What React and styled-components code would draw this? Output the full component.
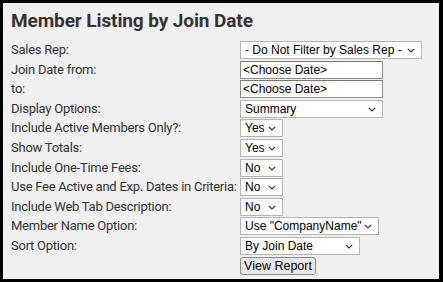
import styled, { createGlobalStyle } from "styled-components";

const Global = createGlobalStyle`
  html, body {
    margin: 0;
    padding: 0;
    background: #000;
  }
  body {
    width: 443px;
    height: 282px;
    overflow: hidden;
  }
`;

const Panel = styled.div`
  box-sizing: border-box;
  width: 443px;
  height: 282px;
  border: 3px solid #000;
  border-right-width: 4px;
  background: #f0f0f0;
  padding: 6px 0 0 8px;
  font-family: Roboto, "Liberation Sans", sans-serif;
  color: #333;
`;

const Title = styled.h1`
  margin: 0;
  font-size: 19px;
  font-weight: 700;
  line-height: 24px;
  letter-spacing: -0.1px;
`;

const Form = styled.div`
  display: grid;
  grid-template-columns: 229px auto;
  grid-auto-rows: 19.6px;
  margin-top: 8px;
`;

const Label = styled.div`
  font-size: 13px;
  line-height: 15px;
  letter-spacing: -0.25px;
  padding-top: 1px;
  white-space: nowrap;
`;

const Field = styled.div`
  display: flex;
  align-items: flex-start;
`;

const Select = styled.div`
  position: relative;
  box-sizing: border-box;
  width: ${(p) => p.$w}px;
  height: 18px;
  border: 1px solid #b4b4b4;
  background: #fff;
  font-family: "Liberation Sans", Arial, sans-serif;
  font-size: 12px;
  line-height: 16px;
  padding-left: 4px;
  color: #000;
  white-space: nowrap;
`;

const Chevron = styled.svg`
  position: absolute;
  right: 6px;
  top: 6px;
  width: 8px;
  height: 5px;
`;

const Input = styled.div`
  box-sizing: border-box;
  width: 143px;
  height: 18px;
  border: 1px solid #8c8c8c;
  border-top-color: #767676;
  background: #fff;
  font-family: "Liberation Sans", Arial, sans-serif;
  font-size: 12px;
  line-height: 16px;
  padding-left: 2px;
  color: #000;
`;

const Button = styled.div`
  box-sizing: border-box;
  width: 76px;
  height: 18px;
  border: 1px solid #8a8a8a;
  border-radius: 3px;
  background: #e9e9e9;
  font-family: "Liberation Sans", Arial, sans-serif;
  font-size: 12.5px;
  line-height: 16px;
  text-align: center;
  color: #000;
`;

const Drop = ({ w, children }) => (
  <Select $w={w}>
    {children}
    <Chevron viewBox="0 0 8 5">
      <path d="M0.8 0.8 L4 4 L7.2 0.8" fill="none" stroke="#333" strokeWidth="1.2" />
    </Chevron>
  </Select>
);

const rows = [
  ["Sales Rep:", <Drop w={182}>- Do Not Filter by Sales Rep -</Drop>],
  ["Join Date from:", <Input>&lt;Choose Date&gt;</Input>],
  ["to:", <Input>&lt;Choose Date&gt;</Input>],
  ["Display Options:", <Drop w={143}>Summary</Drop>],
  ["Include Active Members Only?:", <Drop w={43}>Yes</Drop>],
  ["Show Totals:", <Drop w={43}>Yes</Drop>],
  ["Include One-Time Fees:", <Drop w={43}>No</Drop>],
  ["Use Fee Active and Exp. Dates in Criteria:", <Drop w={43}>No</Drop>],
  ["Include Web Tab Description:", <Drop w={43}>No</Drop>],
  ["Member Name Option:", <Drop w={139}>Use "CompanyName"</Drop>],
  ["Sort Option:", <Drop w={120}>By Join Date</Drop>],
  ["", <Button>View Report</Button>],
];

export default function App() {
  return (
    <>
      <Global />
      <Panel>
        <Title>Member Listing by Join Date</Title>
        <Form>
          {rows.map(([label, control], i) => (
            <>
              <Label key={"l" + i}>{label}</Label>
              <Field key={"f" + i}>{control}</Field>
            </>
          ))}
        </Form>
      </Panel>
    </>
  );
}
